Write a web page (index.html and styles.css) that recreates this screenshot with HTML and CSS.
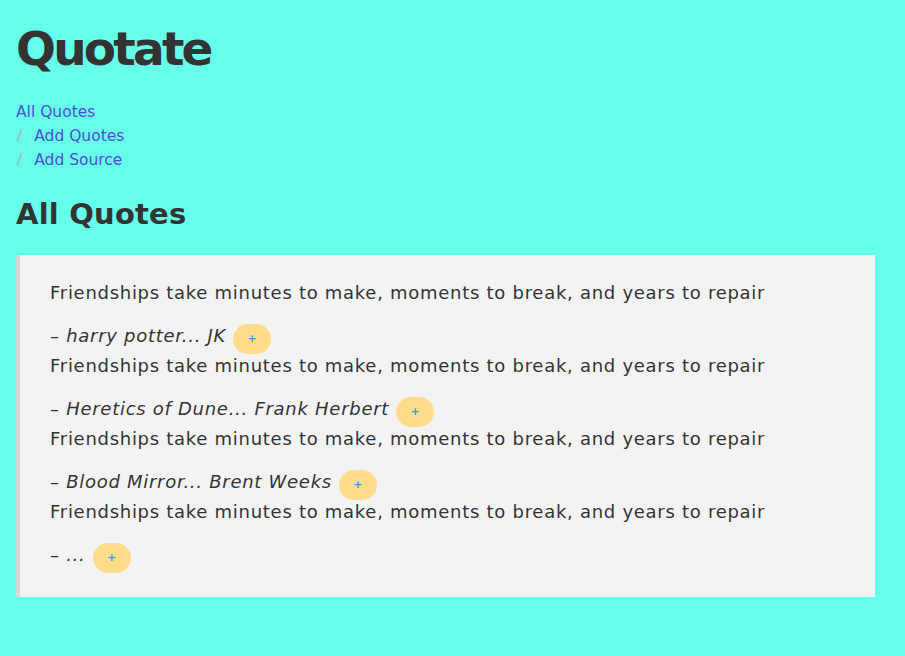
FILE: index.html
```html
<!DOCTYPE html>
<html>

<head>
    <meta charset="UTF-8">
    <meta name="viewport" content="width=device-width, initial-scale=1.0">
    <title>Quotate</title>
    <link rel="stylesheet" href="styles.css">
</head>

<body>
    <h1 class="site-title">Quotate</h1>

    <ul class="breadcrumb">
        <li><a href="#">All Quotes</a></li>
        <li><a href="#">Add Quotes</a></li>
        <li><a href="#">Add Source</a></li>
    </ul>

    <h2 class="page-title">All Quotes</h2>

    <blockquote class="quotes">
        <p>Friendships take minutes to make, moments to break, and years to repair</p>
        <footer><span>&ndash; <cite>harry potter... JK</cite></span><button class="add-button">+</button></footer>
        <p>Friendships take minutes to make, moments to break, and years to repair</p>
        <footer><span>&ndash; <cite>Heretics of Dune... Frank Herbert</cite></span><button class="add-button">+</button></footer>
        <p>Friendships take minutes to make, moments to break, and years to repair</p>
        <footer><span>&ndash; <cite>Blood Mirror... Brent Weeks</cite></span><button class="add-button">+</button></footer>
        <p>Friendships take minutes to make, moments to break, and years to repair</p>
        <footer><span>&ndash; <cite>...</cite></span><button class="add-button">+</button></footer>
    </blockquote>
</body>

</html>
```

FILE: styles.css
```css
:root {
    --page-color: #66ffe9;
    --text-color: #333333;
    --link-color: #4c50cf;
    --badge-color: #ffdc8a;
    --plus-color: #1fa6e6;
}

body {
    font-family: "DejaVu Sans", Verdana, sans-serif;
    background-color: var(--page-color);
    color: var(--text-color);
    margin: 0;
    padding: 0 30px 0 16px;
}

.site-title {
    font-size: 47px;
    font-weight: bold;
    letter-spacing: -2.8px;
    margin: 20px 0 0;
    line-height: 58px;
}

.breadcrumb {
    list-style: none;
    margin: 22px 0 0;
    padding: 0;
    font-size: 15.5px;
    line-height: 24px;
}

.breadcrumb li + li::before {
    content: "/";
    color: #b9a9b0;
    padding: 0 12px 0 1px;
}

.breadcrumb a {
    color: var(--link-color);
    text-decoration: none;
}

.page-title {
    font-size: 29px;
    font-weight: bold;
    letter-spacing: 0.2px;
    margin: 25px 0 0;
    line-height: 34px;
}

.quotes {
    margin: 24px 0 0;
    padding: 23px 30px 27px 30px;
    background-color: #f3f3f3;
    border-left: 4px solid #d6d6d6;
    font-size: 18px;
    letter-spacing: 0.72px;
}

.quotes p {
    margin: 0 0 13px;
    line-height: 30px;
}

.quotes footer {
    display: flex;
    align-items: flex-start;
    height: 30px;
    line-height: 30px;
}

.quotes cite {
    font-style: italic;
}

.add-button {
    width: 38px;
    height: 30px;
    margin: 3px 0 0 7px;
    border: none;
    border-radius: 15px;
    background-color: var(--badge-color);
    color: var(--plus-color);
    font-size: 11px;
    font-weight: bold;
    font-family: "DejaVu Sans", sans-serif;
    line-height: 30px;
    letter-spacing: 0;
    padding: 0;
    cursor: pointer;
}
```
